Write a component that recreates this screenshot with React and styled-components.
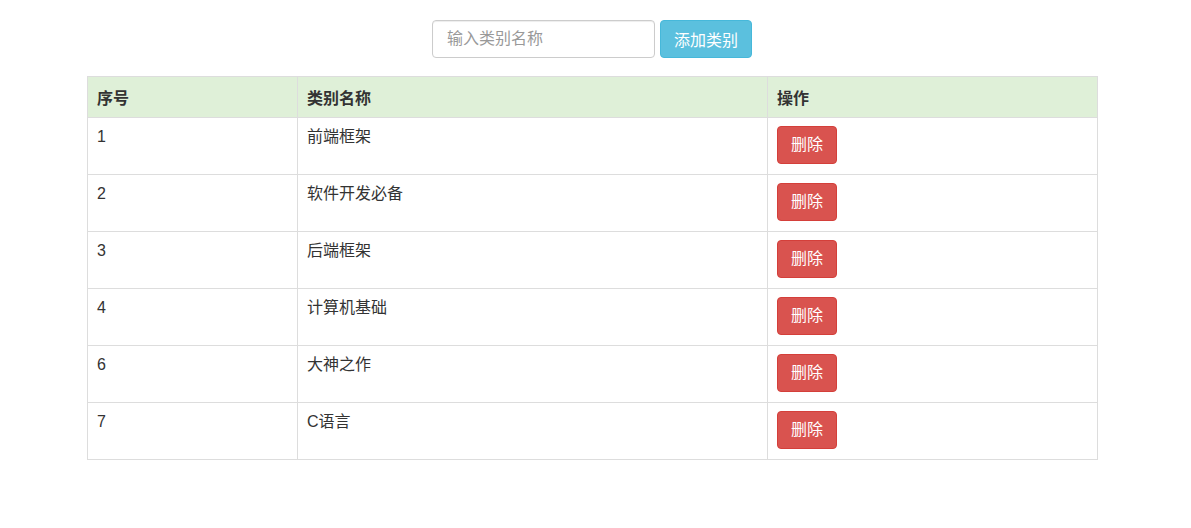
import React, { useState } from 'react';
import styled, { createGlobalStyle } from 'styled-components';

const GlobalStyle = createGlobalStyle`
    body {
        margin: 0;
        background: #fff;
        color: #333;
        font-family: "Liberation Sans", "Noto Sans CJK SC", sans-serif;
        font-size: 16px;
    }
`;

const Page = styled.div`
    width: 1011px;
    margin-left: 87px;
    padding-top: 20px;
`;

const Form = styled.div`
    display: flex;
    justify-content: center;
    gap: 5px;
    padding-right: 1px;
    margin-bottom: 18px;
`;

const Input = styled.input`
    box-sizing: border-box;
    width: 223px;
    height: 38px;
    padding: 0 14px;
    border: 1px solid #ccc;
    border-radius: 4px;
    font: inherit;
    color: #555;
    outline: none;
    box-shadow: inset 0 1px 1px rgba(0, 0, 0, .075);
    &::placeholder { color: #999; }
`;

const Button = styled.button`
    box-sizing: border-box;
    height: 38px;
    min-width: ${p => p.$variant === 'danger' ? '60px' : '92px'};
    padding: 0 12px;
    border: 1px solid ${p => p.$variant === 'danger' ? '#d43f3a' : '#46b8da'};
    background: ${p => p.$variant === 'danger' ? '#d9534f' : '#5bc0de'};
    color: #fff;
    border-radius: 4px;
    font: inherit;
    cursor: pointer;
`;

const Table = styled.table`
    width: 100%;
    border-collapse: collapse;
    table-layout: fixed;
`;

const Th = styled.th`
    box-sizing: border-box;
    height: 41px;
    padding: 0 9px;
    text-align: left;
    font-weight: bold;
    background: #dff0d8;
    border: 1px solid #ddd;
    width: ${p => p.$w};
`;

const Td = styled.td`
    box-sizing: border-box;
    height: 57px;
    padding: 8px 9px;
    vertical-align: top;
    line-height: 22px;
    border: 1px solid #ddd;
`;

const initial = [
    { id: 1, name: '前端框架' },
    { id: 2, name: '软件开发必备' },
    { id: 3, name: '后端框架' },
    { id: 4, name: '计算机基础' },
    { id: 6, name: '大神之作' },
    { id: 7, name: 'C语言' },
];

export default function App() {
    const [list, setList] = useState(initial);
    const [name, setName] = useState('');

    // add new category with the next id
    const add = () => {
        if (!name.trim()) return;
        const id = list.length ? list[list.length - 1].id + 1 : 1;
        setList([...list, { id, name }]);
        setName('');
    };

    return (
        <>
            <GlobalStyle />
            <Page>
                <Form>
                    <Input
                        placeholder="输入类别名称"
                        value={name}
                        onChange={e => setName(e.target.value)}
                    />
                    <Button onClick={add}>添加类别</Button>
                </Form>
                <Table>
                    <thead>
                        <tr>
                            <Th $w="210px">序号</Th>
                            <Th $w="470px">类别名称</Th>
                            <Th>操作</Th>
                        </tr>
                    </thead>
                    <tbody>
                        {list.map(item => (
                            <tr key={item.id}>
                                <Td>{item.id}</Td>
                                <Td>{item.name}</Td>
                                <Td>
                                    <Button
                                        $variant="danger"
                                        onClick={() => setList(list.filter(i => i.id !== item.id))}
                                    >
                                        删除
                                    </Button>
                                </Td>
                            </tr>
                        ))}
                    </tbody>
                </Table>
            </Page>
        </>
    );
}
